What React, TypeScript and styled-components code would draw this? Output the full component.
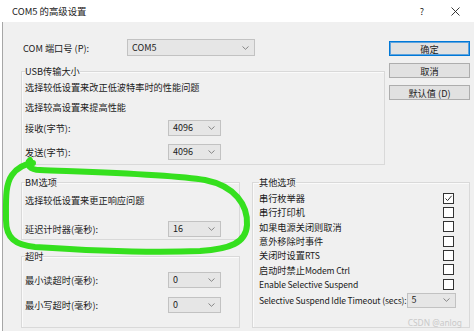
import React from "react";
import styled, { createGlobalStyle } from "styled-components";

const Global = createGlobalStyle`
  html, body { margin: 0; padding: 0; background: #ffffff; }
  body {
    font-family: "Noto Sans CJK SC", "Noto Sans", sans-serif;
    font-size: 9.2px;
    color: #1b1b1b;
  }
  * { box-sizing: border-box; }
`;

const Page = styled.div`
  position: relative;
  width: 474px;
  height: 335px;
  overflow: hidden;
`;

const TitleBar = styled.div`
  height: 22px;
  display: flex;
  align-items: center;
  padding-left: 12px;
  padding-right: 9px;
  background: #ffffff;
`;

const Title = styled.div`
  flex: 1;
  line-height: 12px;
  font-size: 9.4px;
`;

const TitleButtons = styled.div`
  display: flex;
  align-items: center;
  gap: 13px;
`;

const TitleButton = styled.div`
  width: 20px;
  display: flex;
  justify-content: center;
  align-items: center;
  font-size: 9px;
  color: #222;
`;

const Body = styled.div`
  margin-left: 2px;
  border-left: 1px solid #a6a6a6;
  background: #f0f0f0;
  height: 309px;
  padding: 17px 4px 3px 18px;
  display: flex;
  flex-direction: column;
`;

const TopRow = styled.div`
  display: flex;
  justify-content: space-between;
`;

const Column = styled.div<{ $w: number; $gap: number }>`
  width: ${(p) => p.$w}px;
  display: flex;
  flex-direction: column;
  gap: ${(p) => p.$gap}px;
`;

const ButtonColumn = styled.div`
  width: 81px;
  padding-top: 2px;
  display: flex;
  flex-direction: column;
  gap: 7px;
`;

const Button = styled.div<{ $default?: boolean }>`
  height: 15px;
  display: flex;
  align-items: center;
  justify-content: center;
  background: #e1e1e1;
  border: 1px solid ${(p) => (p.$default ? "#0078d7" : "#adadad")};
  box-shadow: ${(p) => (p.$default ? "inset 0 0 0 1px #5ea3dd" : "none")};
  font-size: 9.2px;
  line-height: 12px;
`;

const Row = styled.div<{ $label: number; $h: number; $mt?: number; $indent?: number }>`
  display: grid;
  grid-template-columns: ${(p) => p.$label}px auto;
  align-items: center;
  height: ${(p) => p.$h}px;
  margin-top: ${(p) => p.$mt ?? 0}px;
  padding-left: ${(p) => p.$indent ?? 0}px;
`;

const Label = styled.div`
  line-height: 12px;
  white-space: nowrap;
`;

const Line = styled.div<{ $mt?: number }>`
  line-height: 12px;
  margin-top: ${(p) => p.$mt ?? 0}px;
  white-space: nowrap;
`;

const Combo = styled.div<{ $w: number; $h: number }>`
  width: ${(p) => p.$w}px;
  height: ${(p) => p.$h}px;
  display: flex;
  align-items: center;
  justify-content: space-between;
  padding: 0 5px 0 4px;
  background: #e6e6e6;
  border: 1px solid #c2c2c2;
  font-size: 9px;
  line-height: 12px;
`;

const Chevron = () => (
  <svg width="7" height="4" viewBox="0 0 7 4">
    <path d="M0.5 0.5 L3.5 3.3 L6.5 0.5" fill="none" stroke="#7a7a7a" strokeWidth="0.9" />
  </svg>
);

const Group = styled.fieldset<{ $pt: number; $pb: number; $pl: number; $mt?: number }>`
  margin: ${(p) => p.$mt ?? 0}px 0 0 0;
  min-width: 0;
  border: 1px solid #d9d9d9;
  box-shadow: 1px 1px 0 #fafafa inset;
  padding: ${(p) => p.$pt}px 0 ${(p) => p.$pb}px ${(p) => p.$pl}px;
  display: flex;
  flex-direction: column;
`;

const Legend = styled.legend`
  padding: 0;
  margin: 0;
  line-height: 12px;
  white-space: nowrap;
`;

const BottomRow = styled.div`
  margin-top: 11px;
  display: flex;
  justify-content: space-between;
  align-items: stretch;
  flex: 1;
`;

const OtherGroup = styled(Group)`
  width: 218px;
  position: relative;
`;

const CheckRow = styled.div`
  height: 14.33px;
  display: flex;
  align-items: center;
  justify-content: space-between;
  padding-right: 15px;
`;

const TimeoutRow = styled.div`
  height: 15px;
  margin-top: 1.7px;
  display: flex;
  align-items: center;
  justify-content: space-between;
  padding-right: 13px;
`;

const Latin = styled.span`
  font-size: 8.6px;
  letter-spacing: -0.15px;
`;

const Box = styled.div`
  width: 11px;
  height: 11px;
  border: 1px solid #333333;
  background: #ffffff;
  display: flex;
  align-items: center;
  justify-content: center;
`;

const Watermark = styled.div`
  position: absolute;
  right: 7px;
  bottom: -1px;
  font-size: 8.4px;
  line-height: 10px;
  color: #c9c9c9;
  font-family: "Noto Sans", sans-serif;
`;

const Marker = styled.svg`
  position: absolute;
  left: 0;
  top: 0;
  pointer-events: none;
`;

const CheckBox = ({ checked }: { checked?: boolean }) => (
  <Box>
    {checked && (
      <svg width="9" height="9" viewBox="0 0 9 9">
        <path d="M1.5 4.5 L3.6 6.6 L7.6 1.8" fill="none" stroke="#333" strokeWidth="1" />
      </svg>
    )}
  </Box>
);

const otherRows: { label: React.ReactNode; checked?: boolean }[] = [
  { label: "串行枚举器", checked: true },
  { label: "串行打印机" },
  { label: "如果电源关闭则取消" },
  { label: "意外移除时事件" },
  { label: <>关闭时设置<Latin>RTS</Latin></> },
  { label: <>启动时禁止<Latin>Modem Ctrl</Latin></> },
  { label: <Latin>Enable Selective Suspend</Latin> },
];

export default function App() {
  return (
    <Page>
      <Global />
      <TitleBar>
        <Title>COM5 的高级设置</Title>
        <TitleButtons>
          <TitleButton>?</TitleButton>
          <TitleButton>
            <svg width="9" height="9" viewBox="0 0 9 9">
              <path d="M0.5 0.5 L8.5 8.5 M8.5 0.5 L0.5 8.5" stroke="#222" strokeWidth="0.9" />
            </svg>
          </TitleButton>
        </TitleButtons>
      </TitleBar>
      <Body>
        <TopRow>
          <Column $w={364} $gap={9}>
            <Row $label={104} $h={17} $indent={2}>
              <Label>COM 端口号 (P):</Label>
              <Combo $w={128} $h={17}>
                <span>COM5</span>
                <Chevron />
              </Combo>
            </Row>
            <Group $pt={4} $pb={4} $pl={3}>
              <Legend>USB传输大小</Legend>
              <Line>选择较低设置来改正低波特率时的性能问题</Line>
              <Line $mt={8}>选择较高设置来提高性能</Line>
              <Row $label={143} $h={16} $mt={7}>
                <Label>接收(字节):</Label>
                <Combo $w={53} $h={16}>
                  <span>4096</span>
                  <Chevron />
                </Combo>
              </Row>
              <Row $label={143} $h={16} $mt={8}>
                <Label>发送(字节):</Label>
                <Combo $w={53} $h={16}>
                  <span>4096</span>
                  <Chevron />
                </Combo>
              </Row>
            </Group>
          </Column>
          <ButtonColumn>
            <Button $default>确定</Button>
            <Button>取消</Button>
            <Button>默认值 (D)</Button>
          </ButtonColumn>
        </TopRow>
        <BottomRow>
          <Column $w={219} $gap={0}>
            <Group $pt={6} $pb={2} $pl={3}>
              <Legend>BM选项</Legend>
              <Line>选择较低设置来更正响应问题</Line>
              <Row $label={143} $h={16} $mt={15}>
                <Label>延迟计时器(毫秒):</Label>
                <Combo $w={53} $h={16}>
                  <span>16</span>
                  <Chevron />
                </Combo>
              </Row>
            </Group>
            <Group $pt={10} $pb={14} $pl={3} $mt={10}>
              <Legend>超时</Legend>
              <Row $label={143} $h={16}>
                <Label>最小读超时(毫秒):</Label>
                <Combo $w={53} $h={16}>
                  <span>0</span>
                  <Chevron />
                </Combo>
              </Row>
              <Row $label={143} $h={16} $mt={9}>
                <Label>最小写超时(毫秒):</Label>
                <Combo $w={53} $h={16}>
                  <span>0</span>
                  <Chevron />
                </Combo>
              </Row>
            </Group>
          </Column>
          <OtherGroup $pt={3} $pb={0} $pl={6}>
            <Legend>其他选项</Legend>
            {otherRows.map((r, i) => (
              <CheckRow key={i}>
                <Label>{r.label}</Label>
                <CheckBox checked={r.checked} />
              </CheckRow>
            ))}
            <TimeoutRow>
              <Label>
                <Latin>Selective Suspend Idle Timeout (secs):</Latin>
              </Label>
              <Combo $w={54} $h={15}>
                <span>5</span>
                <Chevron />
              </Combo>
            </TimeoutRow>
            <Watermark>CSDN @anlog</Watermark>
          </OtherGroup>
        </BottomRow>
      </Body>
      <Marker width="474" height="335" viewBox="0 0 474 335">
        <path
          d="M30 160 C25 164 30 170 40 170 C90 172 170 174 205 180 C235 186 248 205 247 225 C246 243 230 249 200 251 C150 253 80 250 35 247 C15 245 6 238 6 220 C6 200 5 185 12 175 C17 168 24 164 33 163"
          fill="none"
          stroke="#35e01e"
          strokeWidth="6"
          strokeLinecap="round"
          strokeLinejoin="round"
        />
      </Marker>
    </Page>
  );
}
